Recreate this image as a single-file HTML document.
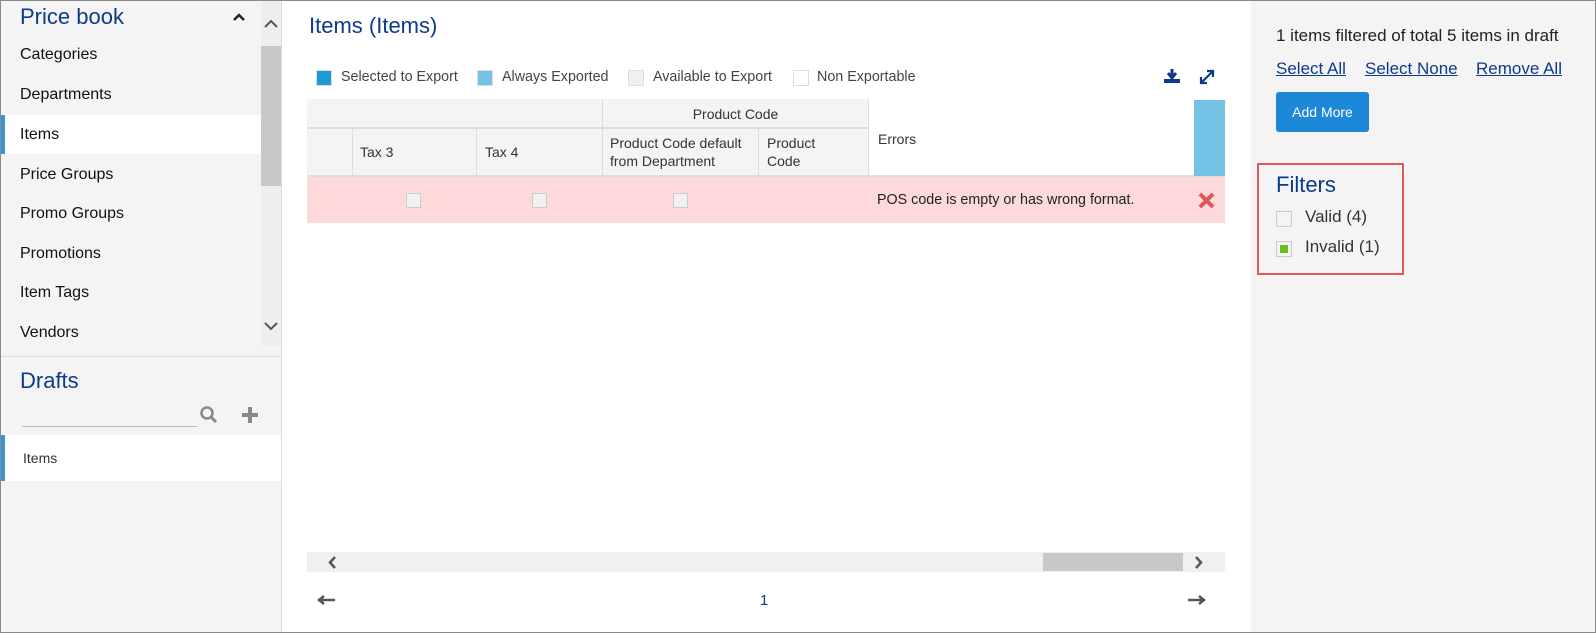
<!DOCTYPE html>
<html><head><meta charset="utf-8"><style>
*{margin:0;padding:0;box-sizing:border-box}
body{width:1596px;height:633px;overflow:hidden;font-family:"Liberation Sans",sans-serif;color:#222;background:#fff;position:relative}
.a{position:absolute}
.frame{left:0;top:0;width:1596px;height:633px;border:1px solid #8a8a8a}
.side{left:1px;top:1px;width:281px;height:631px;background:#f4f4f4;border-right:1px solid #ddd}
.ttl{color:#0d3a8a;font-size:22px}
.mi{left:20px;font-size:16px;color:#111}
.rp{left:1251px;top:1px;width:344px;height:631px;background:#f4f4f4}
.lg{width:16px;height:16px;top:70px;border:1px solid #ddd}
.lt{top:69px;font-size:14.3px;color:#444}
.th{font-size:14px;color:#333}
.cb{width:15px;height:15px;background:#f1f1f1;border:1px solid #ccc}
a{color:#0d3a8a;text-decoration:underline}
</style></head><body>
<div class="a side"></div>
<div class="a rp"></div>
<div class="a ttl" style="left:20px;top:4px">Price book</div>
<svg class="a" style="left:232px;top:12px" width="14" height="10"><path d="M2 8L7 3L12 8" stroke="#222" stroke-width="2.5" fill="none"/></svg>
<div class="a" style="left:261px;top:1px;width:20px;height:345px;background:#eee"></div>
<svg class="a" style="left:263px;top:18px" width="16" height="12"><path d="M2 9L8 3L14 9" stroke="#555" stroke-width="2" fill="none"/></svg>
<div class="a" style="left:261px;top:46px;width:20px;height:140px;background:#c8c8c8"></div>
<svg class="a" style="left:263px;top:320px" width="16" height="12"><path d="M2 3L8 9L14 3" stroke="#555" stroke-width="2" fill="none"/></svg>
<div class="a" style="left:1px;top:115px;width:260px;height:39px;background:#fff;border-left:4px solid #3a96d8"></div>
<div class="a mi" style="top:46px">Categories</div>
<div class="a mi" style="top:86px">Departments</div>
<div class="a mi" style="top:126px">Items</div>
<div class="a mi" style="top:166px">Price Groups</div>
<div class="a mi" style="top:205px">Promo Groups</div>
<div class="a mi" style="top:245px">Promotions</div>
<div class="a mi" style="top:284px">Item Tags</div>
<div class="a mi" style="top:324px">Vendors</div>
<div class="a" style="left:1px;top:356px;width:280px;height:1px;background:#ddd"></div>
<div class="a ttl" style="left:20px;top:368px">Drafts</div>
<div class="a" style="left:22px;top:426px;width:175px;height:1px;background:#bbb"></div>
<svg class="a" style="left:199px;top:405px" width="20" height="20"><circle cx="8" cy="8" r="5.5" stroke="#888" stroke-width="2.5" fill="none"/><path d="M12 12L17 17" stroke="#888" stroke-width="3"/></svg>
<svg class="a" style="left:240px;top:405px" width="20" height="20"><path d="M10 2V18M2 10H18" stroke="#888" stroke-width="4"/></svg>
<div class="a" style="left:1px;top:435px;width:280px;height:46px;background:#fff;border-left:4px solid #3a96d8"></div>
<div class="a" style="left:23px;top:450px;font-size:14px;color:#333">Items</div>

<div class="a ttl" style="left:309px;top:13px">Items (Items)</div>
<div class="a lg" style="left:316px;background:#1a9ad6"></div><div class="a lt" style="left:341px">Selected to Export</div>
<div class="a lg" style="left:477px;background:#74c3e6"></div><div class="a lt" style="left:502px">Always Exported</div>
<div class="a lg" style="left:628px;background:#f0f0f0"></div><div class="a lt" style="left:653px">Available to Export</div>
<div class="a lg" style="left:793px;background:#fff"></div><div class="a lt" style="left:817px">Non Exportable</div>
<svg class="a" style="left:1163px;top:68px" width="18" height="16"><path d="M9 1V9M5 5L9 10L13 5" stroke="#0d3a8a" stroke-width="3" fill="none"/><rect x="1" y="11" width="16" height="4" fill="#0d3a8a"/></svg>
<svg class="a" style="left:1199px;top:69px" width="16" height="16"><path d="M2 14L14 2M8 2H14V8M2 8V14H8" stroke="#0d3a8a" stroke-width="2.2" fill="none"/></svg>

<div class="a" style="left:307px;top:99px;width:887px;height:77px;background:#f4f4f4"></div>
<div class="a" style="left:307px;top:127px;width:295px;height:2px;background:#ddd"></div>
<div class="a" style="left:602px;top:99px;width:1px;height:77px;background:#ddd"></div>
<div class="a" style="left:602px;top:127px;width:267px;height:2px;background:#ddd"></div>
<div class="a" style="left:869px;top:99px;width:325px;height:77px;background:#fff"></div>
<div class="a" style="left:868px;top:99px;width:1px;height:77px;background:#ddd"></div>
<div class="a" style="left:352px;top:128px;width:1px;height:48px;background:#ddd"></div>
<div class="a" style="left:476px;top:128px;width:1px;height:48px;background:#ddd"></div>
<div class="a" style="left:758px;top:128px;width:1px;height:48px;background:#ddd"></div>
<div class="a" style="left:307px;top:175px;width:918px;height:2px;background:#ddd"></div>
<div class="a" style="left:1194px;top:100px;width:31px;height:76px;background:#74c3e6"></div>
<div class="a th" style="left:602px;top:106px;width:267px;text-align:center">Product Code</div>
<div class="a th" style="left:360px;top:144px">Tax 3</div>
<div class="a th" style="left:485px;top:144px">Tax 4</div>
<div class="a th" style="left:610px;top:134px;line-height:18px">Product Code default<br>from Department</div>
<div class="a th" style="left:767px;top:134px;line-height:18px">Product<br>Code</div>
<div class="a th" style="left:878px;top:131px">Errors</div>
<div class="a" style="left:307px;top:177px;width:918px;height:46px;background:#fdd9dc"></div>
<div class="a cb" style="left:406px;top:193px"></div>
<div class="a cb" style="left:532px;top:193px"></div>
<div class="a cb" style="left:673px;top:193px"></div>
<div class="a" style="left:877px;top:192px;font-size:14.3px;color:#222">POS code is empty or has wrong format.</div>
<svg class="a" style="left:1198px;top:192px" width="17" height="17"><path d="M2 2L15 15M15 2L2 15" stroke="#e05555" stroke-width="4"/></svg>

<div class="a" style="left:307px;top:552px;width:918px;height:20px;background:#f0f0f0"></div>
<div class="a" style="left:1043px;top:553px;width:140px;height:18px;background:#c8c8c8"></div>
<svg class="a" style="left:326px;top:555px" width="12" height="15"><path d="M9 2L4 7.5L9 13" stroke="#555" stroke-width="2.5" fill="none"/></svg>
<svg class="a" style="left:1193px;top:555px" width="12" height="15"><path d="M3 2L8 7.5L3 13" stroke="#555" stroke-width="2.5" fill="none"/></svg>
<svg class="a" style="left:316px;top:594px" width="20" height="12"><path d="M19 6H4M8 2L3 6L8 10" stroke="#555" stroke-width="2.5" fill="none"/></svg>
<svg class="a" style="left:1187px;top:594px" width="20" height="12"><path d="M1 6H16M12 2L17 6L12 10" stroke="#555" stroke-width="2.5" fill="none"/></svg>
<div class="a" style="left:760px;top:592px;font-size:15px;color:#0d3a8a">1</div>

<div class="a" style="left:1276px;top:26px;font-size:17px;color:#222">1 items filtered of total 5 items in draft</div>
<div class="a" style="left:1276px;top:59px;font-size:17px"><a>Select All</a></div>
<div class="a" style="left:1365px;top:59px;font-size:17px"><a>Select None</a></div>
<div class="a" style="left:1476px;top:59px;font-size:17px"><a>Remove All</a></div>
<div class="a" style="left:1276px;top:92px;width:93px;height:40px;background:#1e88d8;border-radius:3px;color:#fff;font-size:14px;line-height:40px;text-align:center">Add More</div>
<div class="a" style="left:1257px;top:163px;width:147px;height:112px;border:2px solid #e05a5a"></div>
<div class="a ttl" style="left:1276px;top:172px">Filters</div>
<div class="a cb" style="left:1276px;top:211px;background:#f4f4f4;width:16px;height:16px"></div>
<div class="a" style="left:1305px;top:207px;font-size:17px;color:#333">Valid (4)</div>
<div class="a cb" style="left:1276px;top:241px;width:16px;height:16px;background:#f4f4f4;padding:3px"><div style="width:8px;height:8px;background:#6cbf1a"></div></div>
<div class="a" style="left:1305px;top:237px;font-size:17px;color:#333">Invalid (1)</div>
<div class="a frame"></div>
</body></html>
